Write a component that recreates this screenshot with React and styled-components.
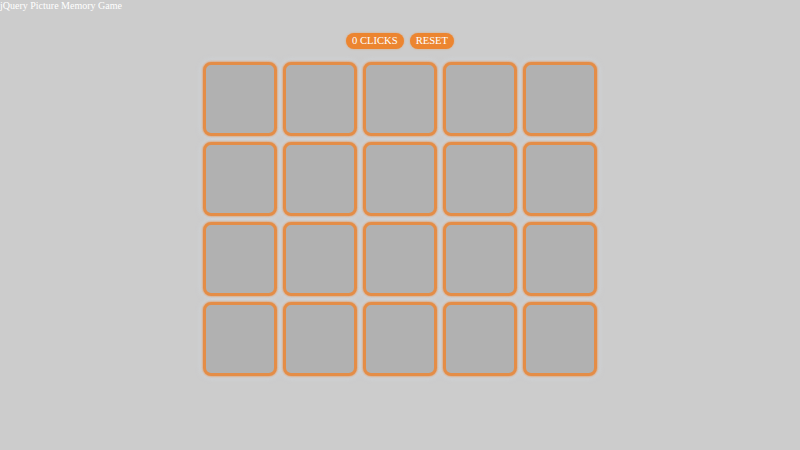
import React, { useState } from "react";
import styled, { createGlobalStyle } from "styled-components";

const Global = createGlobalStyle`
  html, body { margin: 0; padding: 0; }
  body {
    background: #cccccc;
    font-family: "Liberation Serif", "Times New Roman", serif;
    width: 800px;
    height: 450px;
    overflow: hidden;
  }
`;

const Title = styled.h1`
  margin: 0;
  font-size: 10px;
  line-height: 12px;
  font-weight: normal;
  color: #ffffff;
`;

const Controls = styled.div`
  display: flex;
  justify-content: center;
  gap: 6px;
  margin-top: 21px;
`;

const Pill = styled.button`
  border: none;
  background: #ec8530;
  color: #ffffff;
  font-family: "Liberation Serif", "Times New Roman", serif;
  font-size: 10.6px;
  line-height: 16px;
  height: 16px;
  padding: 0 ${(p) => p.$pad}px;
  border-radius: 8px;
  box-shadow: 0 0 2px rgba(236, 133, 48, 0.6);
  cursor: pointer;
`;

const Board = styled.div`
  display: grid;
  grid-template-columns: repeat(5, 74px);
  grid-auto-rows: 74px;
  gap: 6px;
  justify-content: center;
  margin-top: 13px;
`;

const Tile = styled.div`
  box-sizing: border-box;
  background: #b1b1b1;
  border: 3px solid #e48d47;
  border-radius: 8px;
  box-shadow: 0 0 2px 1px rgba(228, 141, 71, 0.55),
    0 0 5px 2px rgba(215, 225, 238, 0.55);
  cursor: pointer;
`;

export default function App() {
  const [clicks, setClicks] = useState(0);
  return (
    <>
      <Global />
      <Title>jQuery Picture Memory Game</Title>
      <Controls>
        <Pill $pad={6}>{clicks} CLICKS</Pill>
        <Pill $pad={6} onClick={() => setClicks(0)}>RESET</Pill>
      </Controls>
      <Board>
        {Array.from({ length: 20 }).map((_, i) => (
          <Tile key={i} onClick={() => setClicks((c) => c + 1)} />
        ))}
      </Board>
    </>
  );
}
